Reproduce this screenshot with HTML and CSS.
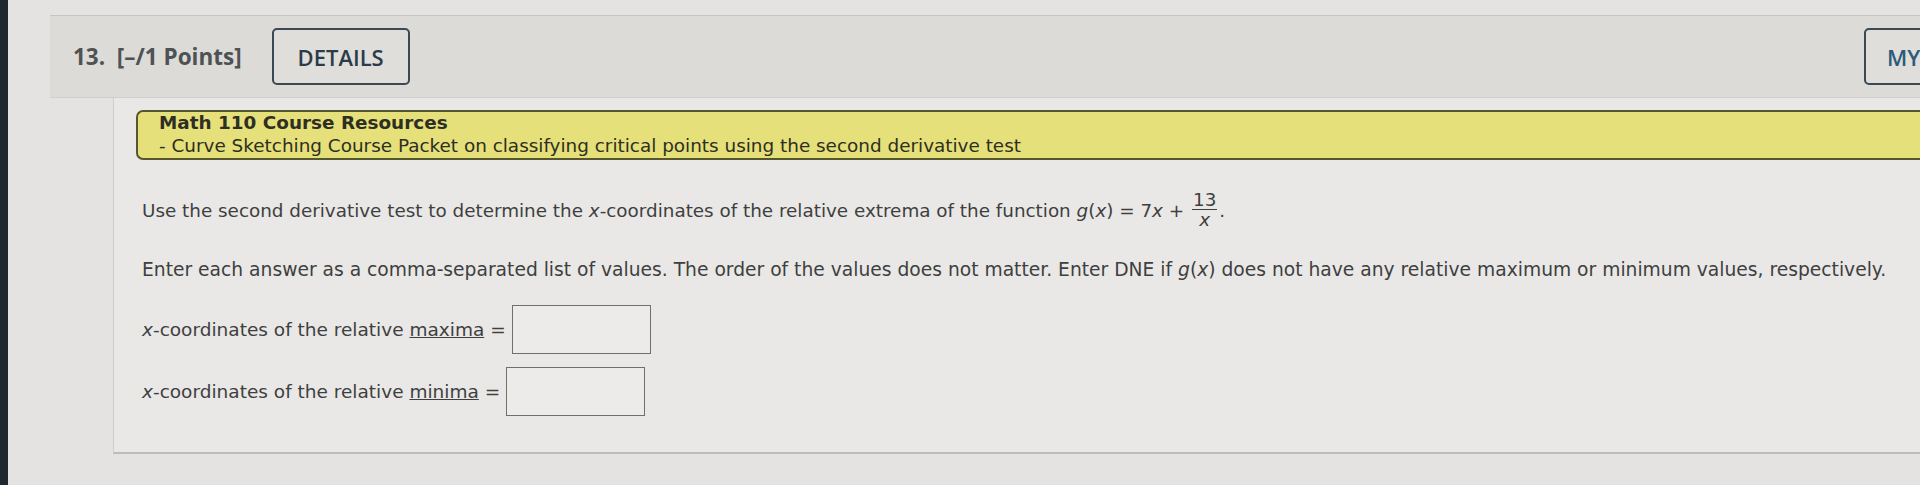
FILE: index.html
```html
<!DOCTYPE html>
<html>
<head>
<meta charset="utf-8">
<link rel="stylesheet" href="styles.css">
</head>
<body>
<div class="screen">
  <div class="header">
    <span class="qnum">13.&nbsp; [–/1 Points]</span>
    <span class="btn details">DETAILS</span>
    <span class="btn my">MY</span>
  </div>
  <div class="content">
    <div class="resources">
      <div class="res-title">Math 110 Course Resources</div>
      <div class="res-link">- Curve Sketching Course Packet on classifying critical points using the second derivative test</div>
    </div>
    <p class="q q1">Use the second derivative test to determine the <i class="mv">x</i>-coordinates of the relative extrema of the function <i class="mv">g</i>(<i class="mv">x</i>) = 7<i class="mv">x</i> + <span class="frac"><span class="num">13</span><span class="den"><i class="mv">x</i></span></span>.</p>
    <p class="q q2">Enter each answer as a comma-separated list of values. The order of the values does not matter. Enter DNE if <i class="mv">g</i>(<i class="mv">x</i>) does not have any relative maximum or minimum values, respectively.</p>
    <div class="row row-max">
      <span class="label"><i class="mv">x</i>-coordinates of the relative <u>maxima</u> =</span>
      <span class="input"></span>
    </div>
    <div class="row row-min">
      <span class="label"><i class="mv">x</i>-coordinates of the relative <u>minima</u> =</span>
      <span class="input"></span>
    </div>
  </div>
</div>
</body>
</html>
```
FILE: styles.css
```css
html, body {
  margin: 0;
  padding: 0;
  background: #e4e3e1;
  overflow: hidden;
}
.screen {
  border-left: 8px solid #1d2831;
  height: 485px;
  box-sizing: border-box;
  padding-top: 15px;
  padding-left: 42px;
}
.header {
  height: 83px;
  box-sizing: border-box;
  background: #dcdbd8;
  border-top: 1px solid #c6c5c2;
  border-bottom: 1px solid #d0cfcc;
  display: flex;
  align-items: center;
  padding-left: 23px;
  white-space: nowrap;
}
.qnum {
  font-family: "Open Sans", sans-serif;
  font-weight: 700;
  font-size: 22.5px;
  color: #4e5254;
}
.btn {
  box-sizing: border-box;
  height: 57px;
  border: 2px solid #3a4954;
  border-radius: 5px;
  display: flex;
  align-items: center;
  justify-content: center;
  font-family: "Open Sans", sans-serif;
  font-weight: 600;
  font-size: 22px;
  color: #2c3b47;
  background: #dfdedb;
}
.details {
  width: 138px;
  margin-left: 30px;
}
.my {
  width: 160px;
  margin-left: auto;
  margin-right: -104px;
  justify-content: flex-start;
  padding-left: 21px;
  color: #2e5a7a;
}
.content {
  margin-left: 63px;
  height: 356px;
  box-sizing: border-box;
  background: #e9e8e6;
  border-left: 1px solid #cfceca;
  border-bottom: 2px solid #bdbcb8;
  padding-top: 12px;
  font-family: "DejaVu Sans", Verdana, sans-serif;
  color: #3e3f40;
}
.resources {
  margin-left: 22px;
  height: 50px;
  box-sizing: border-box;
  background: #e5e07a;
  border: 2px solid #56562c;
  border-right: none;
  border-radius: 7px 0 0 7px;
  padding: 0 0 0 21px;
  color: #2e2e22;
  font-size: 18.4px;
  line-height: 22.5px;
}
.res-title {
  font-weight: 700;
}
.q {
  margin: 0;
  margin-left: 28px;
  font-size: 18.7px;
  white-space: nowrap;
}
.q1 {
  margin-top: 32px;
  line-height: 34px;
  font-size: 18.35px;
}
.q2 {
  margin-top: 27px;
  line-height: 24px;
}
.mv {
  font-style: italic;
}
.frac {
  display: inline-flex;
  flex-direction: column;
  align-items: center;
  vertical-align: middle;
  line-height: 19px;
  margin: 0 2px;
  position: relative;
  top: -2px;
}
.num {
  border-bottom: 1px solid #3e3f40;
  padding: 0 1px;
}
.row {
  display: flex;
  align-items: center;
  margin-left: 28px;
  font-size: 18.5px;
  white-space: nowrap;
}
.row-max {
  margin-top: 23px;
}
.row-min {
  margin-top: 13px;
}
.input {
  display: block;
  width: 139px;
  height: 49px;
  box-sizing: border-box;
  border: 1px solid #6f6f6d;
  background: #ecebe9;
  margin-left: 6px;
}
```
